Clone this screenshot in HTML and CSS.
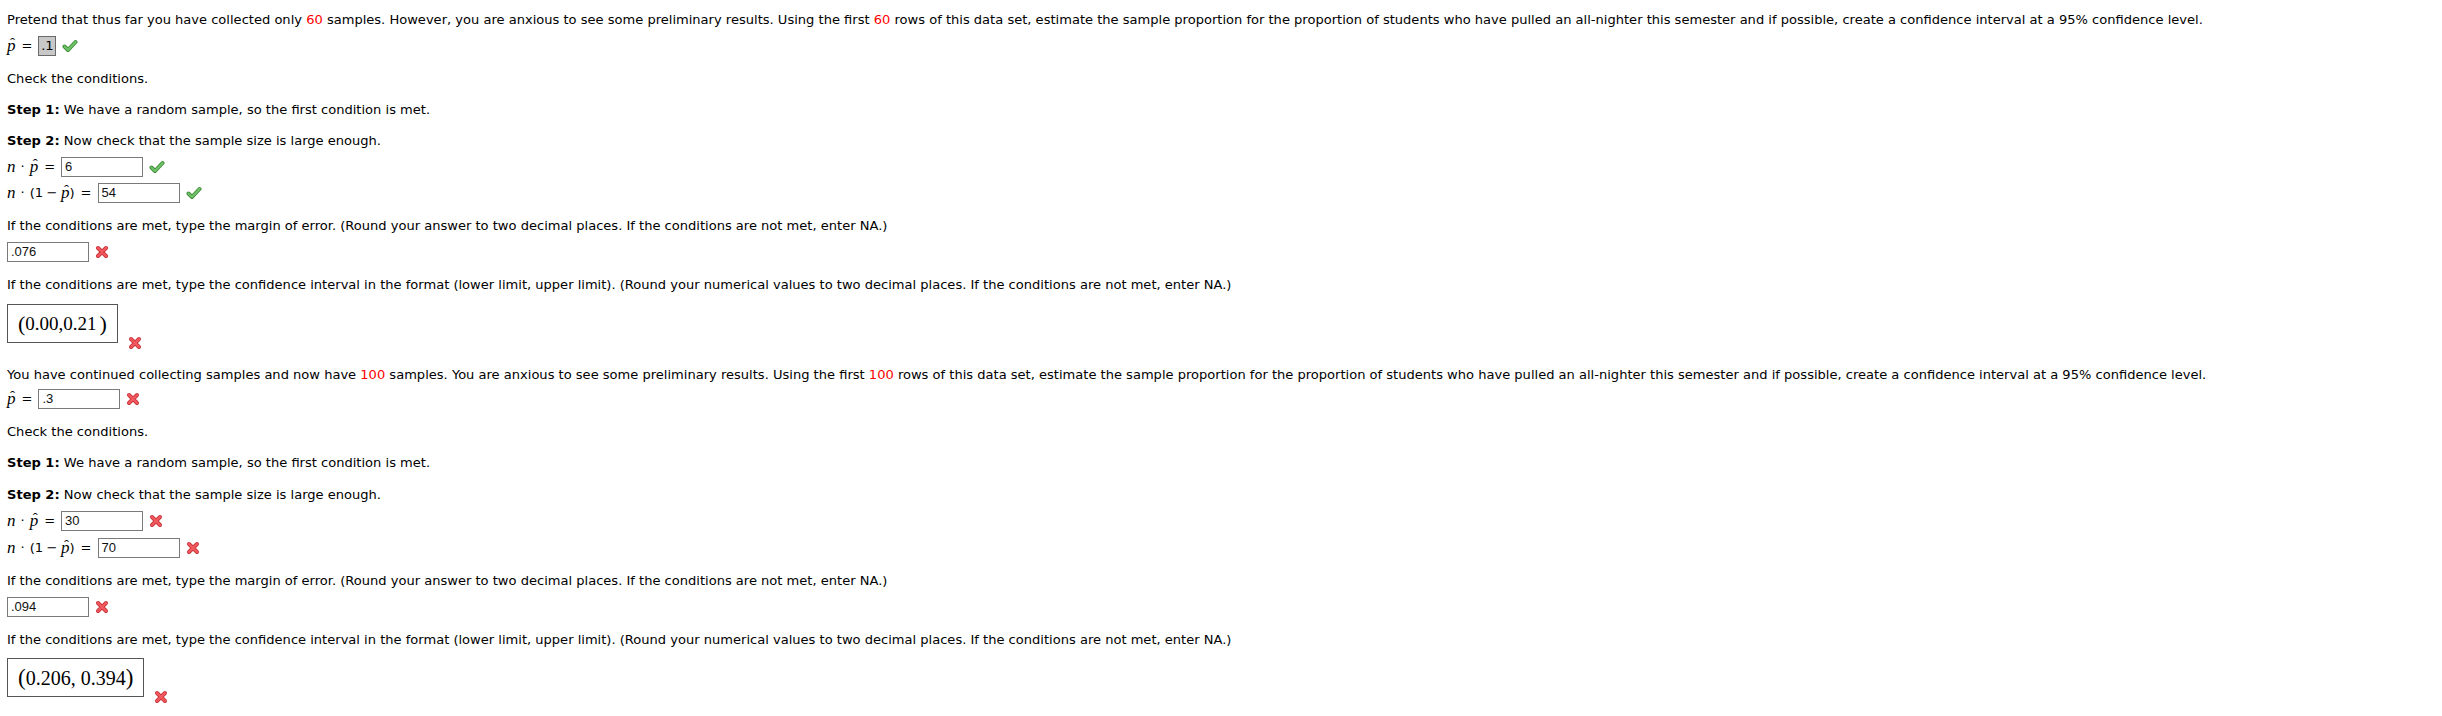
FILE: index.html
```html
<!DOCTYPE html>
<html>
<head>
<meta charset="utf-8">
<link rel="stylesheet" href="styles.css">
</head>
<body>
<div class="page">

  <div class="t">Pretend that thus far you have collected only <span class="red">60</span> samples. However, you are anxious to see some preliminary results. Using the first <span class="red">60</span> rows of this data set, estimate the sample proportion for the proportion of students who have pulled an all-nighter this semester and if possible, create a confidence interval at a 95% confidence level.</div>
  <div class="row">
    <span class="mi hat">p</span><span class="eq">=</span><span class="given">.1</span>
    <svg class="ok" width="16" height="14" viewBox="0 0 16 14"><path d="M2.5 7.5 L6 11 L13.5 3" fill="none" stroke="#3d8a37" stroke-width="4" stroke-linecap="round" stroke-linejoin="round"/><path d="M2.5 7.5 L6 11 L13.5 3" fill="none" stroke="#6fc267" stroke-width="2.2" stroke-linecap="round" stroke-linejoin="round"/></svg>
  </div>
  <div class="t">Check the conditions.</div>
  <div class="t"><b>Step 1:</b> We have a random sample, so the first condition is met.</div>
  <div class="t"><b>Step 2:</b> Now check that the sample size is large enough.</div>
  <div class="row">
    <span class="mi">n</span><span class="dot">·</span><span class="mi hat">p</span><span class="eq">=</span><span class="inp">6</span>
    <svg class="ok" width="16" height="14" viewBox="0 0 16 14"><path d="M2.5 7.5 L6 11 L13.5 3" fill="none" stroke="#3d8a37" stroke-width="4" stroke-linecap="round" stroke-linejoin="round"/><path d="M2.5 7.5 L6 11 L13.5 3" fill="none" stroke="#6fc267" stroke-width="2.2" stroke-linecap="round" stroke-linejoin="round"/></svg>
  </div>
  <div class="row r2">
    <span class="mi">n</span><span class="dot">·</span><span class="par">(1</span><span class="minus">−</span><span class="mi hat">p</span><span class="par">)</span><span class="eq">=</span><span class="inp">54</span>
    <svg class="ok" width="16" height="14" viewBox="0 0 16 14"><path d="M2.5 7.5 L6 11 L13.5 3" fill="none" stroke="#3d8a37" stroke-width="4" stroke-linecap="round" stroke-linejoin="round"/><path d="M2.5 7.5 L6 11 L13.5 3" fill="none" stroke="#6fc267" stroke-width="2.2" stroke-linecap="round" stroke-linejoin="round"/></svg>
  </div>
  <div class="t">If the conditions are met, type the margin of error. (Round your answer to two decimal places. If the conditions are not met, enter NA.)</div>
  <div class="row">
    <span class="inp">.076</span>
    <svg class="bad" width="14" height="14" viewBox="0 0 14 14"><path d="M3 3 L11 11 M11 3 L3 11" stroke="#c8343a" stroke-width="4" stroke-linecap="round"/><path d="M3 3 L11 11 M11 3 L3 11" stroke="#f25a60" stroke-width="2.3" stroke-linecap="round"/></svg>
  </div>
  <div class="t">If the conditions are met, type the confidence interval in the format (lower limit, upper limit). (Round your numerical values to two decimal places. If the conditions are not met, enter NA.)</div>
  <div class="ci">
    <div class="cibox small"><span class="bp">(</span>0.00,0.21<span class="bp gap">)</span></div>
    <svg class="bad low" width="14" height="14" viewBox="0 0 14 14"><path d="M3 3 L11 11 M11 3 L3 11" stroke="#c8343a" stroke-width="4" stroke-linecap="round"/><path d="M3 3 L11 11 M11 3 L3 11" stroke="#f25a60" stroke-width="2.3" stroke-linecap="round"/></svg>
  </div>

  <div class="t after-ci">You have continued collecting samples and now have <span class="red">100</span> samples. You are anxious to see some preliminary results. Using the first <span class="red">100</span> rows of this data set, estimate the sample proportion for the proportion of students who have pulled an all-nighter this semester and if possible, create a confidence interval at a 95% confidence level.</div>
  <div class="row tight">
    <span class="mi hat">p</span><span class="eq">=</span><span class="inp">.3</span>
    <svg class="bad" width="14" height="14" viewBox="0 0 14 14"><path d="M3 3 L11 11 M11 3 L3 11" stroke="#c8343a" stroke-width="4" stroke-linecap="round"/><path d="M3 3 L11 11 M11 3 L3 11" stroke="#f25a60" stroke-width="2.3" stroke-linecap="round"/></svg>
  </div>
  <div class="t">Check the conditions.</div>
  <div class="t"><b>Step 1:</b> We have a random sample, so the first condition is met.</div>
  <div class="t step2"><b>Step 2:</b> Now check that the sample size is large enough.</div>
  <div class="row">
    <span class="mi">n</span><span class="dot">·</span><span class="mi hat">p</span><span class="eq">=</span><span class="inp">30</span>
    <svg class="bad" width="14" height="14" viewBox="0 0 14 14"><path d="M3 3 L11 11 M11 3 L3 11" stroke="#c8343a" stroke-width="4" stroke-linecap="round"/><path d="M3 3 L11 11 M11 3 L3 11" stroke="#f25a60" stroke-width="2.3" stroke-linecap="round"/></svg>
  </div>
  <div class="row r3">
    <span class="mi">n</span><span class="dot">·</span><span class="par">(1</span><span class="minus">−</span><span class="mi hat">p</span><span class="par">)</span><span class="eq">=</span><span class="inp">70</span>
    <svg class="bad" width="14" height="14" viewBox="0 0 14 14"><path d="M3 3 L11 11 M11 3 L3 11" stroke="#c8343a" stroke-width="4" stroke-linecap="round"/><path d="M3 3 L11 11 M11 3 L3 11" stroke="#f25a60" stroke-width="2.3" stroke-linecap="round"/></svg>
  </div>
  <div class="t">If the conditions are met, type the margin of error. (Round your answer to two decimal places. If the conditions are not met, enter NA.)</div>
  <div class="row">
    <span class="inp">.094</span>
    <svg class="bad" width="14" height="14" viewBox="0 0 14 14"><path d="M3 3 L11 11 M11 3 L3 11" stroke="#c8343a" stroke-width="4" stroke-linecap="round"/><path d="M3 3 L11 11 M11 3 L3 11" stroke="#f25a60" stroke-width="2.3" stroke-linecap="round"/></svg>
  </div>
  <div class="t">If the conditions are met, type the confidence interval in the format (lower limit, upper limit). (Round your numerical values to two decimal places. If the conditions are not met, enter NA.)</div>
  <div class="ci ci2">
    <div class="cibox large"><span class="bp2">(</span>0.206, 0.394<span class="bp2">)</span></div>
    <svg class="bad low" width="14" height="14" viewBox="0 0 14 14"><path d="M3 3 L11 11 M11 3 L3 11" stroke="#c8343a" stroke-width="4" stroke-linecap="round"/><path d="M3 3 L11 11 M11 3 L3 11" stroke="#f25a60" stroke-width="2.3" stroke-linecap="round"/></svg>
  </div>

</div>
</body>
</html>
```

FILE: styles.css
```css
html, body {
  margin: 0;
  padding: 0;
  background: #ffffff;
}
body {
  font-family: "DejaVu Sans", Verdana, sans-serif;
  font-size: 13.05px;
  line-height: 16px;
  color: #000000;
  min-height: 716px;
}
.page {
  padding: 12px 7px 12px 7px;
  display: flex;
  flex-direction: column;
  align-items: flex-start;
}
.t {
  height: 16px;
  white-space: nowrap;
  margin-top: 15px;
}
.page > .t:first-child {
  margin-top: 0;
}
.t.after-ci {
  margin-top: 24px;
}
.t.step2 {
  margin-top: 16px;
}
.red {
  color: #ff0000;
}
b {
  font-weight: bold;
}
.row {
  display: flex;
  align-items: center;
  height: 20px;
  margin-top: 8px;
}
.row.r2 {
  margin-top: 6px;
}
.row.r3 {
  margin-top: 7px;
}
.row.tight {
  margin-top: 6px;
}
.mi {
  font-family: "Liberation Serif", "Times New Roman", serif;
  font-style: italic;
  font-size: 17px;
  line-height: 16px;
}
.hat {
  position: relative;
  display: inline-block;
}
.hat::after {
  content: "\02C6";
  position: absolute;
  left: 3px;
  top: -3px;
  font-style: normal;
  font-size: 15px;
}
.dot {
  margin: 0 5px 0 5px;
}
.par {
  margin-left: 0;
}
.minus {
  margin: 0 3.5px;
}
.eq {
  margin-left: 6px;
  margin-right: 6px;
}
.given {
  box-sizing: border-box;
  width: 18px;
  height: 20px;
  background: #c8c8c8;
  border: 1px solid #6a6a6a;
  display: flex;
  align-items: center;
  justify-content: center;
  font-size: 13px;
}
.inp {
  box-sizing: border-box;
  width: 82px;
  height: 20px;
  border: 1px solid #7a7a7a;
  font-family: "Liberation Sans", Arial, sans-serif;
  font-size: 13px;
  padding-left: 3px;
  display: flex;
  align-items: center;
  color: #111;
}
.ok {
  margin-left: 6px;
}
.bad {
  margin-left: 6px;
}
.ci {
  display: flex;
  align-items: flex-end;
  margin-top: 11px;
}
.ci.ci2 {
  margin-top: 10px;
}
.cibox {
  box-sizing: border-box;
  height: 39px;
  border: 1px solid #555555;
  padding: 0 10px;
  display: flex;
  align-items: center;
  font-family: "Liberation Serif", "Times New Roman", serif;
  white-space: nowrap;
}
.cibox.small {
  font-size: 19px;
}
.cibox.large {
  font-size: 20px;
}
.bp {
  font-size: 22px;
}
.bp2 {
  font-size: 23px;
}
.bp.gap {
  margin-left: 3px;
}
.bad.low {
  margin-left: 10px;
  margin-bottom: -7px;
}
```
